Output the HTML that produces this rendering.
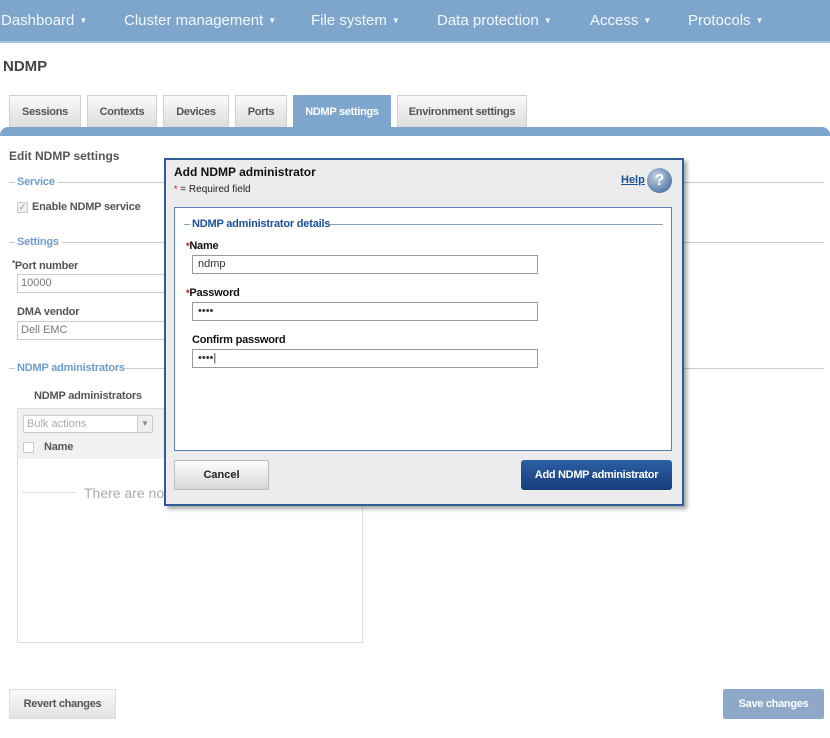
<!DOCTYPE html>
<html><head><style>
*{box-sizing:border-box;margin:0;padding:0}
body{width:830px;height:738px;position:relative;overflow:hidden;background:#fff;font-family:"Liberation Sans",Arial,sans-serif;font-size:11px;color:#333}
.a{position:absolute}
.nav{left:0;top:0;width:830px;height:43px;background:#7ea6cd;border-bottom:2px solid #a9c4de}
.nav span{position:absolute;top:12px;color:#f4f8fc;font-size:15px}
.nav i{font-style:normal;font-size:8px;vertical-align:2px;margin-left:5px}
.tab{top:95px;height:33px;background:linear-gradient(#fafafa,#dcdcdc);border:1px solid #d0d0d0;border-bottom:none;font-weight:bold;color:#555;text-align:center;line-height:33px;font-size:11px;letter-spacing:-0.3px}
.lg{color:#6f9cc8;font-weight:bold;font-size:11px;letter-spacing:-0.2px}
.hr{height:1px;background:#ccc}
.lbl{font-weight:bold;color:#555;font-size:11px;letter-spacing:-0.2px}
.inp{border:1px solid #ccc;height:19px;color:#777;padding-left:3px;line-height:17px;font-size:11px}
.dinp{border:1px solid #9a9a9a;height:19px;background:#fff;padding-left:5px;line-height:17px;font-size:11px;color:#333}
.dl{font-weight:bold;color:#111;font-size:11px;letter-spacing:-0.2px}
.star{color:#c00;font-size:9px}
</style></head><body>
<div class="a nav">
<span style="left:1px">Dashboard<i>▼</i></span>
<span style="left:124px">Cluster management<i>▼</i></span>
<span style="left:311px">File system<i>▼</i></span>
<span style="left:437px">Data protection<i>▼</i></span>
<span style="left:590px">Access<i>▼</i></span>
<span style="left:688px">Protocols<i>▼</i></span>
</div>
<div class="a" style="left:3px;top:58px;font-size:15px;font-weight:bold;color:#444">NDMP</div>
<div class="a tab" style="left:9px;width:72px">Sessions</div>
<div class="a tab" style="left:87px;width:70px">Contexts</div>
<div class="a tab" style="left:163px;width:66px">Devices</div>
<div class="a tab" style="left:235px;width:52px">Ports</div>
<div class="a tab" style="left:293px;width:98px;background:#7ea6cd;color:#fff;border-color:#7ea6cd">NDMP settings</div>
<div class="a tab" style="left:397px;width:130px">Environment settings</div>
<div class="a" style="left:0;top:127px;width:830px;height:9px;background:#7ea6cd;border-radius:8px 8px 0 0"></div>

<div class="a" style="left:9px;top:149px;font-size:12px;font-weight:bold;color:#555">Edit NDMP settings</div>
<div class="a hr" style="left:9px;top:182px;width:6px"></div><div class="a lg" style="left:17px;top:176px">Service</div><div class="a hr" style="left:58px;top:182px;width:766px"></div>
<div class="a" style="left:17px;top:202px;width:11px;height:11px;border:1px solid #ccc;background:#eee;color:#999;font-size:9px;line-height:9px;text-align:center">✓</div>
<div class="a lbl" style="left:32px;top:201px">Enable NDMP service</div>
<div class="a hr" style="left:9px;top:242px;width:6px"></div><div class="a lg" style="left:17px;top:236px">Settings</div><div class="a hr" style="left:62px;top:242px;width:762px"></div>
<div class="a lbl" style="left:12px;top:259px"><span style="font-size:8px;vertical-align:3px">*</span>Port number</div>
<div class="a inp" style="left:17px;top:274px;width:160px">10000</div>
<div class="a lbl" style="left:17px;top:306px">DMA vendor</div>
<div class="a inp" style="left:17px;top:321px;width:160px">Dell EMC</div>
<div class="a hr" style="left:9px;top:368px;width:6px"></div><div class="a lg" style="left:17px;top:362px">NDMP administrators</div><div class="a hr" style="left:125px;top:368px;width:699px"></div>
<div class="a lbl" style="left:34px;top:390px">NDMP administrators</div>
<div class="a" style="left:17px;top:408px;width:346px;height:235px;border:1px solid #ddd"></div>
<div class="a" style="left:18px;top:409px;width:344px;height:50px;background:#f1f1f1"></div>
<div class="a inp" style="left:23px;top:415px;width:130px;height:18px;background:#fff;color:#aaa">Bulk actions</div>
<div class="a" style="left:137px;top:416px;width:15px;height:16px;background:#eee;border-left:1px solid #ccc;color:#888;font-size:8px;text-align:center;line-height:16px">▼</div>
<div class="a" style="left:23px;top:442px;width:11px;height:11px;border:1px solid #ccc;background:#fff"></div>
<div class="a lbl" style="left:44px;top:441px">Name</div>
<div class="a hr" style="left:22px;top:492px;width:54px;background:#ddd"></div>
<div class="a" style="left:84px;top:485px;font-size:14px;color:#aaa">There are no</div>

<div class="a" style="left:9px;top:689px;width:107px;height:30px;background:linear-gradient(#fafafa,#e2e2e2);border:1px solid #ddd;font-weight:bold;color:#555;text-align:center;line-height:28px;letter-spacing:-0.3px">Revert changes</div>
<div class="a" style="left:723px;top:689px;width:101px;height:30px;background:#8ea8c8;border-radius:2px;font-weight:bold;color:#fff;text-align:center;line-height:30px;letter-spacing:-0.3px">Save changes</div>

<div class="a" style="left:164px;top:158px;width:520px;height:348px;background:#ececec;border:2px solid #2c5f98;box-shadow:3px 3px 4px rgba(0,0,0,.35)"></div>
<div class="a" style="left:174px;top:165px;font-size:12px;font-weight:bold;color:#111">Add NDMP administrator</div>
<div class="a" style="left:174px;top:184px;font-size:10px;color:#222"><span class="star">*</span> = Required field</div>
<div class="a" style="left:621px;top:174px;font-weight:bold;color:#1a4f9a;text-decoration:underline;font-size:11px">Help</div>
<div class="a" style="left:647px;top:168px;width:25px;height:25px;border-radius:50%;background:radial-gradient(circle at 40% 35%,#c8d6e8,#5c7ea8 70%,#3a5a84);color:#fff;font-weight:bold;font-size:16px;text-align:center;line-height:25px">?</div>
<div class="a" style="left:174px;top:207px;width:498px;height:244px;background:#fff;border:1px solid #5a82b0"></div>
<div class="a" style="left:184px;top:224px;width:6px;height:1px;background:#8aa"></div>
<div class="a" style="left:192px;top:218px;font-weight:bold;color:#1a4f9a;letter-spacing:-0.2px">NDMP administrator details</div>
<div class="a" style="left:329px;top:224px;width:334px;height:1px;background:#8aa0b8"></div>
<div class="a dl" style="left:186px;top:240px"><span class="star">*</span>Name</div>
<div class="a dinp" style="left:192px;top:255px;width:346px">ndmp</div>
<div class="a dl" style="left:186px;top:287px"><span class="star">*</span>Password</div>
<div class="a dinp" style="left:192px;top:302px;width:346px">••••</div>
<div class="a dl" style="left:192px;top:334px">Confirm password</div>
<div class="a dinp" style="left:192px;top:349px;width:346px">••••|</div>
<div class="a" style="left:174px;top:460px;width:95px;height:30px;background:linear-gradient(#fdfdfd,#d8d8d8);border:1px solid #bbb;border-radius:2px;font-weight:bold;color:#222;text-align:center;line-height:28px">Cancel</div>
<div class="a" style="left:521px;top:460px;width:151px;height:30px;background:linear-gradient(#2e5fa4,#163c7c);border-radius:3px;font-weight:bold;color:#fff;text-align:center;line-height:30px;letter-spacing:-0.3px">Add NDMP administrator</div>
</body></html>
